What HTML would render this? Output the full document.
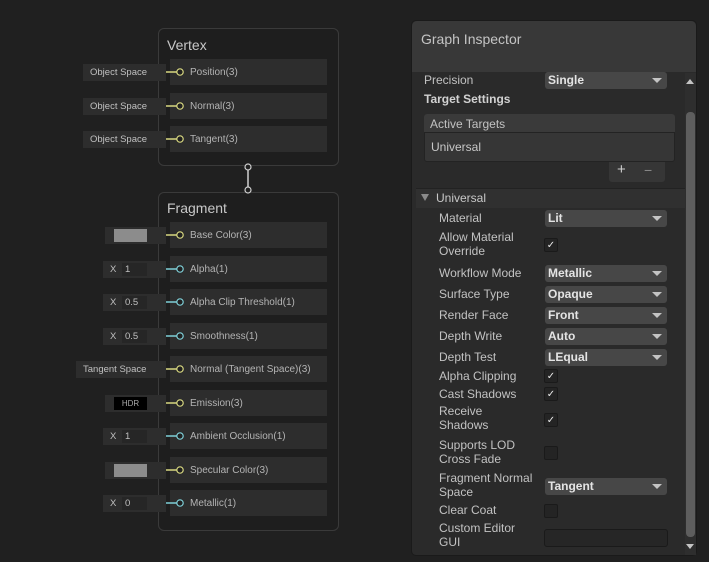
<!DOCTYPE html>
<html><head><style>
*{margin:0;padding:0;box-sizing:border-box}
body{width:709px;height:562px;background:#202020;position:relative;overflow:hidden;font-family:"Liberation Sans",sans-serif}
.a{position:absolute}
.node{position:absolute;left:158px;width:181px;border:1px solid #3a3a3a;border-radius:6px;background:#1e1e1e}
.title{position:absolute;left:167px;color:#c8c8c8;font-size:14px}
.row{position:absolute;left:170px;width:157px;height:26px;background:#2d2d2d;color:#b4b4b4;font-size:10px;line-height:28px;padding-left:20px}
.in{position:absolute;height:17px;background:#2d2d2d;color:#c0c0c0;font-size:9.5px;line-height:17px}
.lbl{position:absolute;left:439px;color:#c2c2c2;font-size:12px;line-height:14px}
.dd{position:absolute;left:545px;width:122px;height:17px;background:#474747;border-radius:3px;color:#e4e4e4;font-weight:bold;font-size:12px;line-height:17px;padding-left:3px}
.dd:after{content:"";position:absolute;right:5px;top:6px;border-left:5px solid transparent;border-right:5px solid transparent;border-top:5px solid #c4c4c4}
.cb{position:absolute;left:544px;width:14px;height:14px;background:#242424;border:1px solid #1a1a1a;border-radius:2px;color:#e8e8e8;font-size:10px;line-height:13px;text-align:center}
</style></head><body>
<div class="node" style="top:28px;height:138px"></div>
<div class="node" style="top:192px;height:339px"></div>
<div class="title" style="top:37px">Vertex</div>
<div class="title" style="top:200px">Fragment</div>
<svg class="a" style="left:0;top:0" width="400" height="562">
<line x1="248" y1="167" x2="248" y2="190" stroke="#cfcfcf" stroke-width="1.5"/>
<circle cx="248" cy="167" r="3" fill="#202020" stroke="#cfcfcf" stroke-width="1.2"/>
<circle cx="248" cy="190" r="3" fill="#202020" stroke="#cfcfcf" stroke-width="1.2"/>
</svg>
<div id="g"></div>
<!-- inspector -->
<div class="a" style="left:411px;top:20px;width:286px;height:536px;background:#2a2a2a;border-radius:5px;border:1px solid #1a1a1a"></div>
<div class="a" style="left:412px;top:21px;width:284px;height:51px;background:#383838;border-radius:5px 5px 0 0"></div>
<div class="a" style="left:421px;top:31px;color:#c4c4c4;font-size:14px">Graph Inspector</div>
<div class="a" style="left:685px;top:73px;width:11px;height:482px;background:#2e2e2e"></div>
<div class="a" style="left:686px;top:112px;width:9px;height:425px;background:#5e5e5e;border-radius:4px"></div>
<div class="a" style="left:686px;top:79px;border-left:4px solid transparent;border-right:4px solid transparent;border-bottom:5px solid #c4c4c4"></div>
<div class="a" style="left:686px;top:544px;border-left:4px solid transparent;border-right:4px solid transparent;border-top:5px solid #c4c4c4"></div>
<div class="a" style="left:424px;top:73px;color:#c2c2c2;font-size:12px">Precision</div>
<div class="dd" style="top:72px">Single</div>
<div class="a" style="left:424px;top:92px;color:#d2d2d2;font-size:12px;font-weight:bold">Target Settings</div>
<div class="a" style="left:424px;top:114px;width:251px;height:48px;background:#363636;border:1px solid #232323;border-radius:3px"></div>
<div class="a" style="left:424px;top:114px;width:251px;height:19px;background:#3a3a3a;border-bottom:1px solid #232323;border-radius:3px 3px 0 0"></div>
<div class="a" style="left:430px;top:117px;color:#c2c2c2;font-size:12px">Active Targets</div>
<div class="a" style="left:431px;top:140px;color:#c8c8c8;font-size:12px">Universal</div>
<div class="a" style="left:609px;top:162px;width:56px;height:20px;background:#363636;border-radius:0 0 3px 3px"></div>
<div class="a" style="left:617px;top:161px;color:#d0d0d0;font-size:15px">+</div>
<div class="a" style="left:644px;top:162px;color:#8a8a8a;font-size:14px">−</div>
<div class="a" style="left:416px;top:188px;width:269px;height:20px;background:#303030;border-top:1px solid #222"></div>
<div class="a" style="left:421px;top:194px;border-left:4px solid transparent;border-right:4px solid transparent;border-top:7px solid #8a8a8a"></div>
<div class="a" style="left:436px;top:191px;color:#c8c8c8;font-size:12px">Universal</div>
<div id="p"></div>
<script>
var g='',Y='#d8d880',C='#7fd0d8';
function r(t,l,c,inp){g+='<div class="row" style="top:'+t+'px">'+l+'</div>';
var cy=t+13;
g+='<svg class="a" style="left:150px;top:'+(cy-6)+'px" width="40" height="12"><circle cx="7" cy="6" r="2" fill="'+c+'"/><line x1="11" y1="6" x2="27" y2="6" stroke="'+c+'" stroke-width="1.5"/><circle cx="30" cy="6" r="3.2" fill="#202020" stroke="'+c+'" stroke-width="1.2"/></svg>';
var top=cy-8;
if(inp[0]=='t')g+='<div class="in" style="left:'+inp[1]+'px;top:'+top+'px;width:'+(166-inp[1])+'px;padding-left:7px">'+inp[2]+'</div>';
if(inp[0]=='x')g+='<div class="in" style="left:103px;top:'+top+'px;width:63px;padding-left:7px">X<span style="position:absolute;left:19px;top:2px;width:25px;height:13px;background:#262626;line-height:13px;padding-left:3px">'+inp[1]+'</span></div>';
if(inp[0]=='c')g+='<div class="in" style="left:105px;top:'+top+'px;width:61px"><span style="position:absolute;left:9px;top:2px;width:33px;height:13px;background:'+inp[1]+';color:#aaa;font-size:8px;text-align:center;line-height:13px">'+(inp[2]||'')+'</span></div>';
}
r(59,'Position(3)',Y,['t',83,'Object Space']);
r(93,'Normal(3)',Y,['t',83,'Object Space']);
r(126,'Tangent(3)',Y,['t',83,'Object Space']);
r(222,'Base Color(3)',Y,['c','#8c8c8c']);
r(256,'Alpha(1)',C,['x','1']);
r(289,'Alpha Clip Threshold(1)',C,['x','0.5']);
r(323,'Smoothness(1)',C,['x','0.5']);
r(356,'Normal (Tangent Space)(3)',Y,['t',76,'Tangent Space']);
r(390,'Emission(3)',Y,['c','#000','HDR']);
r(423,'Ambient Occlusion(1)',C,['x','1']);
r(457,'Specular Color(3)',Y,['c','#8c8c8c']);
r(490,'Metallic(1)',C,['x','0']);
document.getElementById('g').innerHTML=g;
var p='';
function L(t,s){p+='<div class="lbl" style="top:'+t+'px">'+s+'</div>'}
function D(t,s){p+='<div class="dd" style="top:'+t+'px">'+s+'</div>'}
function K(t,c){p+='<div class="cb" style="top:'+t+'px">'+(c?'✓':'')+'</div>'}
L(211,'Material');D(210,'Lit');
L(230,'Allow Material<br>Override');K(238,1);
L(266,'Workflow Mode');D(265,'Metallic');
L(287,'Surface Type');D(286,'Opaque');
L(308,'Render Face');D(307,'Front');
L(329,'Depth Write');D(328,'Auto');
L(350,'Depth Test');D(349,'LEqual');
L(369,'Alpha Clipping');K(369,1);
L(387,'Cast Shadows');K(387,1);
L(404,'Receive<br>Shadows');K(413,1);
L(438,'Supports LOD<br>Cross Fade');K(446,0);
L(471,'Fragment Normal<br>Space');D(478,'Tangent');
L(503,'Clear Coat');K(504,0);
L(521,'Custom Editor<br>GUI');
p+='<div class="a" style="left:544px;top:529px;width:124px;height:18px;background:#262626;border:1px solid #1a1a1a;border-radius:3px"></div>';
document.getElementById('p').innerHTML=p;
</script>
</body></html>
